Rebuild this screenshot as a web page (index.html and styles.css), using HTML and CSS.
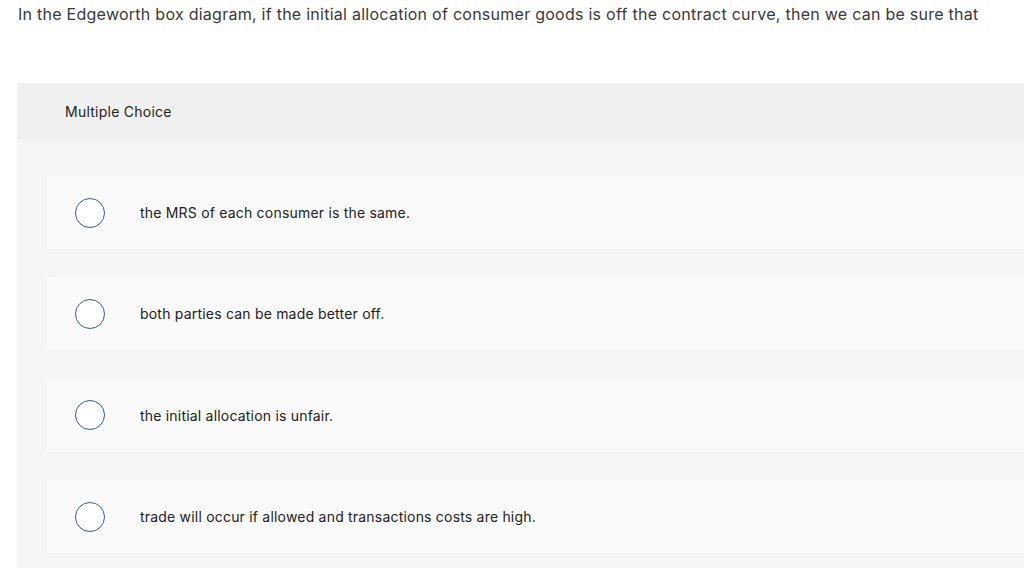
FILE: index.html
```html
<!DOCTYPE html>
<html>
<head>
<meta charset="utf-8">
<link rel="stylesheet" href="styles.css">
</head>
<body>
<div class="page">
  <p class="question">In the Edgeworth box diagram, if the initial allocation of consumer goods is off the contract curve, then we can be sure that</p>
  <div class="box">
    <div class="box-header">Multiple Choice</div>
    <div class="box-body">
      <div class="option"><span class="radio"></span><span class="label">the MRS of each consumer is the same.</span></div>
      <div class="option"><span class="radio"></span><span class="label">both parties can be made better off.</span></div>
      <div class="option"><span class="radio"></span><span class="label">the initial allocation is unfair.</span></div>
      <div class="option"><span class="radio"></span><span class="label">trade will occur if allowed and transactions costs are high.</span></div>
    </div>
  </div>
</div>
</body>
</html>
```

FILE: styles.css
```css
html, body {
  margin: 0;
  padding: 0;
  background: #ffffff;
  overflow: hidden;
}
body {
  font-family: Inter, "Liberation Sans", sans-serif;
  color: #333333;
}
.page {
  padding: 0 0 0 17px;
  width: 1040px;
}
.question {
  margin: 0;
  padding: 5px 0 0 1px;
  font-size: 16px;
  line-height: 18px;
  letter-spacing: 0.26px;
  color: #3a3a3a;
  white-space: nowrap;
}
.box {
  margin-top: 60px;
  border-radius: 4px 0 0 0;
  background: #f5f5f5;
}
.box-header {
  background: #f0f0f0;
  height: 56px;
  display: flex;
  align-items: center;
  padding-left: 48px;
  font-size: 14px;
  letter-spacing: 0.25px;
  color: #222222;
  border-radius: 4px 0 0 0;
}
.box-body {
  padding: 37px 0 20px 30px;
  display: flex;
  flex-direction: column;
  gap: 28.4px;
}
.option {
  background: #fafafa;
  height: 73px;
  border-radius: 3px 0 0 3px;
  display: flex;
  align-items: center;
  padding-left: 28px;
}
.radio {
  width: 28px;
  height: 28px;
  border: 1.6px solid #2f5f8f;
  border-radius: 50%;
  background: #ffffff;
  flex: none;
}
.label {
  margin-left: 35px;
  font-size: 14px;
  letter-spacing: 0.2px;
  color: #222222;
}
```
